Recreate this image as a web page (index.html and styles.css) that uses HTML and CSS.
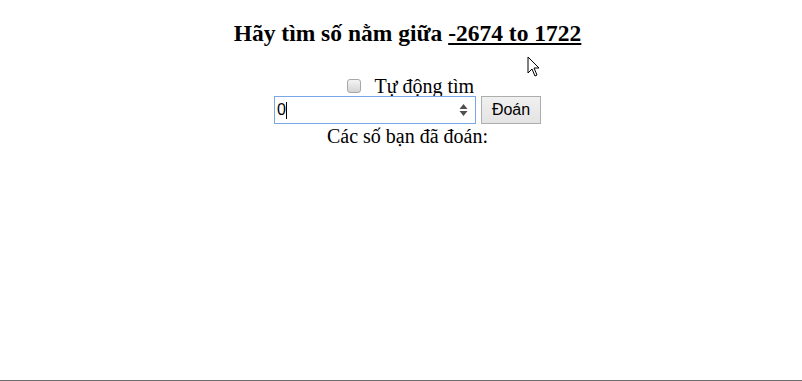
FILE: index.html
```html
<!DOCTYPE html>
<html lang="vi">
<head>
    <meta charset="UTF-8">
    <title>Đoán số</title>
    <link rel="stylesheet" href="styles.css">
</head>
<body>
    <div class="game">
        <h2 class="title">Hãy tìm số nằm giữa <u>-2674 to 1722</u></h2>
        <div class="auto">
            <input type="checkbox" id="auto">
            <label for="auto">Tự động tìm</label>
        </div>
        <div class="guess">
            <div class="number-box">
                <input type="number" id="number" value="0">
                <span class="caret"></span>
                <span class="spin">
                    <svg width="9" height="14" viewBox="0 0 9 14">
                        <path d="M0.5 6 L4.5 1 L8.5 6 Z M0.5 8 L4.5 13 L8.5 8 Z" fill="#505050"/>
                    </svg>
                </span>
            </div>
            <button>Đoán</button>
        </div>
        <div class="history">Các số bạn đã đoán:</div>
    </div>
    <svg class="cursor" width="14" height="22" viewBox="0 0 14 22">
        <path d="M1 1 L1 17 L5 13 L8 20 L10 19 L7 12 L12 12 Z" fill="#fff" stroke="#000" stroke-width="1"/>
    </svg>
    <div class="bottom-line"></div>
</body>
</html>
```

FILE: styles.css
```css
html, body { margin: 0; height: 100%; }
body { font-family: "Liberation Serif", serif; font-size: 20px; color: #000; background: #fff; position: relative; overflow: hidden; }
.game { text-align: center; padding: 20px 0 0 13px; }
.title { font-size: 23.5px; margin: 0 0 27px; line-height: 27px; }
.auto { line-height: 24px; height: 22px; }
.auto input {
    -webkit-appearance: none; appearance: none; margin: 0 9px 0 6px; width: 14px; height: 14px;
    vertical-align: 0; border: 1px solid #a8a8a8; border-radius: 3px; box-sizing: border-box;
    background: linear-gradient(#f4f4f4, #d4d4d4);
}
.guess { display: flex; justify-content: center; gap: 5px; }
.number-box { position: relative; }
.number-box input {
    width: 202px; height: 28px; box-sizing: border-box; font-family: "Liberation Sans", sans-serif;
    font-size: 16px; border: 1px solid #7aa7e8; padding: 1px 2px; margin: 0; outline: none;
    -moz-appearance: textfield;
}
.number-box input::-webkit-inner-spin-button,
.number-box input::-webkit-outer-spin-button { -webkit-appearance: none; margin: 0; }
.caret { position: absolute; left: 12px; top: 6px; width: 1px; height: 17px; background: #000; }
.spin { position: absolute; right: 8px; top: 7px; line-height: 0; }
.guess button {
    height: 28px; width: 60px; font-family: "Liberation Sans", sans-serif; font-size: 16px;
    border: 1px solid #adadad; background: linear-gradient(#f0f0f0, #e3e3e3); margin: 0; padding: 0; color: #000;
}
.history { line-height: 24px; }
.cursor { position: absolute; left: 527px; top: 56px; }
.bottom-line { position: absolute; left: 0; right: 0; bottom: 0; height: 1px; background: #6b6b6b; }
```
